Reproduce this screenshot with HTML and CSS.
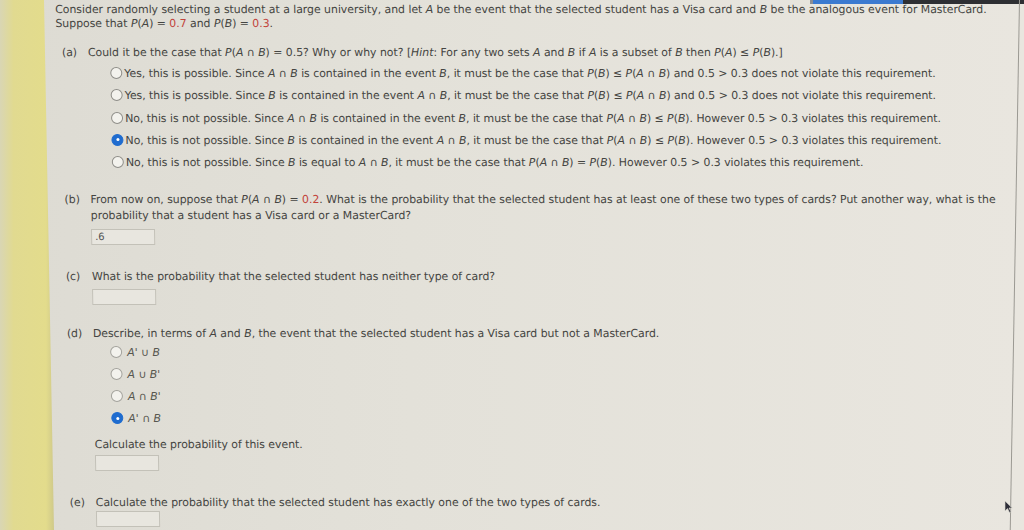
FILE: index.html
```html
<!DOCTYPE html>
<html lang="en">
    <head>
        <meta charset="UTF-8" />
        <link rel="stylesheet" href="styles.css">
        <title>Probability - Visa and MasterCard</title>
    </head>
    <body>
        <div class="screen">
            <div class="strip"></div>
            <main class="question">
                <p class="intro">
                    Consider randomly selecting a student at a large university, and let <i>A</i> be the event that the selected student has a Visa card and <i>B</i> be the analogous event for MasterCard.<br>
                    Suppose that <i>P</i>(<i>A</i>) = <span class="given">0.7</span> and <i>P</i>(<i>B</i>) = <span class="given">0.3</span>.
                </p>

                <!-- (a) -->
                <section class="part">
                    <span class="label">(a)</span>
                    <div class="body">
                        <p class="ask">Could it be the case that <i>P</i>(<i>A</i> &cap; <i>B</i>) = 0.5? Why or why not? [<i>Hint</i>: For any two sets <i>A</i> and <i>B</i> if <i>A</i> is a subset of <i>B</i> then <i>P</i>(<i>A</i>) &le; <i>P</i>(<i>B</i>).]</p>
                        <ul class="choices">
                            <li><span class="radio"></span>Yes, this is possible. Since <i>A</i> &cap; <i>B</i> is contained in the event <i>B</i>, it must be the case that <i>P</i>(<i>B</i>) &le; <i>P</i>(<i>A</i> &cap; <i>B</i>) and 0.5 &gt; 0.3 does not violate this requirement.</li>
                            <li><span class="radio"></span>Yes, this is possible. Since <i>B</i> is contained in the event <i>A</i> &cap; <i>B</i>, it must be the case that <i>P</i>(<i>B</i>) &le; <i>P</i>(<i>A</i> &cap; <i>B</i>) and 0.5 &gt; 0.3 does not violate this requirement.</li>
                            <li><span class="radio"></span>No, this is not possible. Since <i>A</i> &cap; <i>B</i> is contained in the event <i>B</i>, it must be the case that <i>P</i>(<i>A</i> &cap; <i>B</i>) &le; <i>P</i>(<i>B</i>). However 0.5 &gt; 0.3 violates this requirement.</li>
                            <li><span class="radio checked"></span>No, this is not possible. Since <i>B</i> is contained in the event <i>A</i> &cap; <i>B</i>, it must be the case that <i>P</i>(<i>A</i> &cap; <i>B</i>) &le; <i>P</i>(<i>B</i>). However 0.5 &gt; 0.3 violates this requirement.</li>
                            <li><span class="radio"></span>No, this is not possible. Since <i>B</i> is equal to <i>A</i> &cap; <i>B</i>, it must be the case that <i>P</i>(<i>A</i> &cap; <i>B</i>) = <i>P</i>(<i>B</i>). However 0.5 &gt; 0.3 violates this requirement.</li>
                        </ul>
                    </div>
                </section>

                <!-- (b) -->
                <section class="part part-b">
                    <span class="label">(b)</span>
                    <div class="body">
                        <p class="ask">From now on, suppose that <i>P</i>(<i>A</i> &cap; <i>B</i>) = <span class="given">0.2</span>. What is the probability that the selected student has at least one of these two types of cards? Put another way, what is the probability that a student has a Visa card or a MasterCard?</p>
                        <div class="answer">.6</div>
                    </div>
                </section>

                <!-- (c) -->
                <section class="part part-c">
                    <span class="label">(c)</span>
                    <div class="body">
                        <p class="ask">What is the probability that the selected student has neither type of card?</p>
                        <div class="answer"></div>
                    </div>
                </section>

                <!-- (d) -->
                <section class="part part-d">
                    <span class="label">(d)</span>
                    <div class="body">
                        <p class="ask">Describe, in terms of <i>A</i> and <i>B</i>, the event that the selected student has a Visa card but not a MasterCard.</p>
                        <ul class="choices sets">
                            <li><span class="radio"></span><i>A'</i> &cup; <i>B</i></li>
                            <li><span class="radio"></span><i>A</i> &cup; <i>B'</i></li>
                            <li><span class="radio"></span><i>A</i> &cap; <i>B'</i></li>
                            <li><span class="radio checked"></span><i>A'</i> &cap; <i>B</i></li>
                        </ul>
                        <p class="ask calc">Calculate the probability of this event.</p>
                        <div class="answer"></div>
                    </div>
                </section>

                <!-- (e) -->
                <section class="part part-e">
                    <span class="label">(e)</span>
                    <div class="body">
                        <p class="ask">Calculate the probability that the selected student has exactly one of the two types of cards.</p>
                        <div class="answer"></div>
                    </div>
                </section>
            </main>
        </div>

        <!-- bits of the monitor that ended up in the photo -->
        <div class="tabbar"><span class="tab-edge"></span><span class="tab-blue"></span></div>
        <div class="edge-line"></div>
        <svg class="cursor" width="9" height="13" viewBox="0 0 9 13">
            <path d="M1 1 L1 11 L3.5 8.5 L5.5 12.5 L7 11.8 L5 8 L8.2 8 Z" fill="#2f2f3a" stroke="#d8d6cf" stroke-width="0.6" />
        </svg>
    </body>
</html>
```

FILE: styles.css
```css
* {
    margin: 0;
    padding: 0;
    box-sizing: border-box;
}
:root {
    --text: #454542;
    --red: #c2433b;
    --blue: #1f6ccf;
    --line: #c3c1b8;
    --font-fam: 'DejaVu Sans', Verdana, sans-serif;
}

body {
    width: 1024px;
    height: 530px;
    overflow: hidden;
    background: linear-gradient(to right, #dddbd3 0%, #e3e1d9 40%, #e9e6df 100%);
    color: var(--text);
    font-family: var(--font-fam);
    font-size: 11px;
    letter-spacing: -0.08px;
    position: relative;
}

.screen {
    display: flex;
    height: 100%;
}

/* yellow margin on the left, leaning like the photo */
.strip {
    width: 54px;
    flex-shrink: 0;
    background: linear-gradient(to right, #d9d6b4 0%, #e1da90 25%, #e3dc8c 85%, #cfc98a 100%);
    clip-path: polygon(0 0, 44px 0, 54px 100%, 0 100%);
}

/* ========== question ========== */
.question {
    flex: 1;
    margin-left: 1px;
    padding-top: 3px;
    transform: skewX(1deg);
    transform-origin: top left;
}

i {
    font-style: italic;
}

.intro {
    line-height: 14px;
}

.given {
    color: var(--red);
}

.part {
    display: flex;
    padding-left: 6px;
    margin-top: 14px;
}

.label {
    width: 26px;
    flex-shrink: 0;
    line-height: 16px;
}

.body {
    flex: 1;
    padding-right: 12px;
}

.ask {
    line-height: 16px;
}

/* radio lists */
.choices {
    list-style: none;
    margin-top: 2px;
    padding-left: 22px;
}

.choices li {
    height: 22.3px;
    line-height: 22.3px;
    white-space: nowrap;
}

.radio {
    display: inline-block;
    vertical-align: middle;
    width: 12px;
    height: 12px;
    margin: -2px 2px 0 0;
    border-radius: 50%;
    border: 1px solid #8e8d88;
    background-color: #f3f2ed;
    position: relative;
}

.radio.checked {
    background-color: var(--blue);
    border-color: var(--blue);
}

.radio.checked::after {
    content: '';
    position: absolute;
    left: 3.5px;
    top: 3.5px;
    width: 3px;
    height: 3px;
    border-radius: 50%;
    background-color: #fff;
}

.sets {
    margin-top: 0;
    padding-left: 17px;
    color: #57574f;
}

.sets li {
    height: 22px;
    line-height: 22px;
}

.sets .radio {
    margin-right: 5px;
    border-color: #a3a29c;
}

.sets .radio.checked {
    border-color: var(--blue);
}

/* answer boxes */
.answer {
    width: 64px;
    height: 16px;
    margin-top: 5px;
    border: 1px solid var(--line);
    background-color: #e8e6df;
    font-size: 10px;
    line-height: 14px;
    padding-left: 3px;
    color: #555;
}

.part-b {
    margin-top: 18px;
}

.part-c {
    margin-top: 24px;
}

.part-c .answer {
    margin-top: 4px;
}

.part-d {
    margin-top: 21px;
}

.calc {
    margin-top: 7px;
}

.part-d .answer {
    margin-top: 2px;
}

.part-e {
    margin-top: 24px;
}

.part-e .answer {
    margin-top: 0;
}

/* ========== photo edges ========== */
.tabbar {
    position: absolute;
    top: 0;
    left: 810px;
    right: 0;
    height: 4px;
    display: flex;
    background-color: #2e2f33;
}

.tab-edge {
    width: 3px;
    background-color: #8b8d92;
}

.tab-blue {
    width: 90px;
    background-color: #3b7ad0;
}

.edge-line {
    position: absolute;
    top: 0;
    left: 1019px;
    width: 1px;
    height: 530px;
    background-color: #9b9993;
    transform: skewX(-1deg);
    transform-origin: top left;
}

.cursor {
    position: absolute;
    left: 1004px;
    top: 500px;
}
```
